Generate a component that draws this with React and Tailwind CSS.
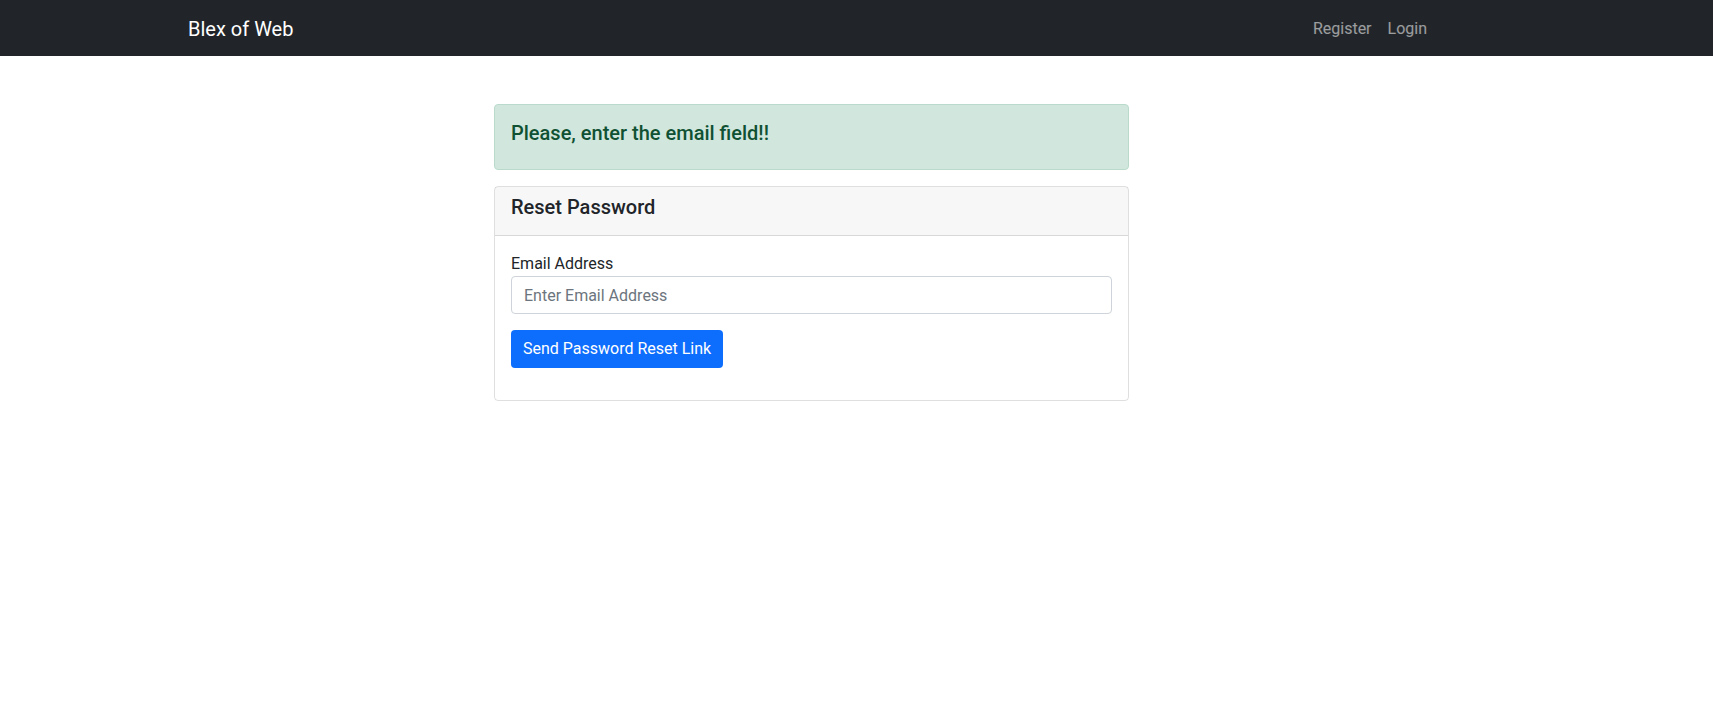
export default function App() {
  return (
    <div className="min-h-screen bg-white text-[#212529]" style={{ fontFamily: 'Roboto, "Liberation Sans", sans-serif' }}>
      <nav className="h-[56px] bg-[#212529]">
        <div className="ml-[188px] flex h-full w-[1247px] items-center justify-between pt-[2px]">
          <a href="#" className="py-[5px] text-[20px] leading-[30px] text-white">
            Blex of Web
          </a>
          <div className="flex text-[16px] leading-[24px]">
            <a href="#" className="px-2 py-2 text-white/55">Register</a>
            <a href="#" className="px-2 py-2 text-white/55">Login</a>
          </div>
        </div>
      </nav>

      <main className="ml-[494px] mt-[48px] w-[635px]">
        <div className="mb-4 rounded border border-[#badbcc] bg-[#d1e7dd] p-4 text-[#0f5132]">
          <h5 className="mb-2 text-[20px] font-medium leading-[24px]">Please, enter the email field!!</h5>
        </div>

        <div className="rounded border border-black/[0.125]">
          <div className="border-b border-black/[0.125] bg-black/[0.03] px-4 pt-2 pb-2">
            <h5 className="mb-2 text-[20px] font-medium leading-[24px]">Reset Password</h5>
          </div>
          <div className="p-4">
            <form onSubmit={(e) => e.preventDefault()}>
              <div className="mb-4">
                <label className="block text-[16px] leading-[24px]">Email Address</label>
                <input
                  type="email"
                  placeholder="Enter Email Address"
                  className="block h-[38px] w-full rounded border border-[#ced4da] px-3 text-[16px] leading-[24px] text-[#212529] placeholder:text-[#6c757d] focus:outline-none"
                />
              </div>
              <div className="mb-4">
                <button
                  type="submit"
                  className="h-[38px] rounded bg-[#0d6efd] px-3 text-[16px] leading-[24px] text-white"
                >
                  Send Password Reset Link
                </button>
              </div>
            </form>
          </div>
        </div>
      </main>
    </div>
  )
}
